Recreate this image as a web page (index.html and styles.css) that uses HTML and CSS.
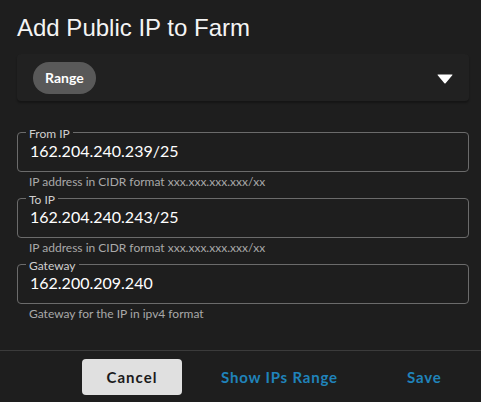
FILE: index.html
```html
<!DOCTYPE html>
<html lang="en">
<head>
<meta charset="utf-8">
<title>Add Public IP to Farm</title>
<link rel="stylesheet" href="styles.css">
</head>
<body>
<div class="dialog">
  <div class="content">
    <h2 class="title">Add Public IP to Farm</h2>
    <div class="select">
      <span class="chip">Range</span>
      <svg class="arrow" width="16" height="10" viewBox="0 0 16 10"><path d="M1 0.5 H15 Q16 0.5 15.3 1.3 L8.6 9.2 Q8 9.8 7.4 9.2 L0.7 1.3 Q0 0.5 1 0.5 Z" fill="#ffffff"/></svg>
    </div>
    <div class="fields">
      <div class="field">
        <fieldset class="box">
          <legend class="label">From IP</legend>
          <div class="value">162.204.240.239/25</div>
        </fieldset>
        <div class="helper">IP address in CIDR format xxx.xxx.xxx.xxx/xx</div>
      </div>
      <div class="field">
        <fieldset class="box">
          <legend class="label">To IP</legend>
          <div class="value">162.204.240.243/25</div>
        </fieldset>
        <div class="helper">IP address in CIDR format xxx.xxx.xxx.xxx/xx</div>
      </div>
      <div class="field">
        <fieldset class="box">
          <legend class="label">Gateway</legend>
          <div class="value">162.200.209.240</div>
        </fieldset>
        <div class="helper">Gateway for the IP in ipv4 format</div>
      </div>
    </div>
  </div>
  <div class="actions">
    <button class="btn cancel">Cancel</button>
    <button class="btn text show">Show IPs Range</button>
    <button class="btn text save">Save</button>
  </div>
</div>
</body>
</html>
```
FILE: styles.css
```css
html, body {
  margin: 0;
  padding: 0;
  background: #1e1e1e;
}
body {
  font-family: Lato, "Noto Sans", sans-serif;
  color: #ffffff;
  width: 481px;
  height: 402px;
  overflow: hidden;
}
.content {
  padding: 0 12px 28px 17px;
}
.title {
  margin: 12px 0 0 0;
  font-family: "Liberation Sans", Arial, sans-serif;
  font-weight: 400;
  font-size: 24px;
  line-height: 32px;
  color: #f4f4f4;
}
.select {
  margin-top: 10px;
  height: 47px;
  box-sizing: border-box;
  padding: 8px 16px 7px 16px;
  background: #212121;
  border-radius: 4px;
  box-shadow: 0 2px 2px rgba(0, 0, 0, 0.3);
  display: flex;
  align-items: flex-start;
  justify-content: space-between;
}
.chip {
  height: 32px;
  line-height: 32px;
  padding: 0 12px;
  border-radius: 16px;
  background: #595959;
  color: #ffffff;
  font-weight: 700;
  font-size: 14px;
}
.arrow {
  margin-top: 12px;
  display: block;
}
.fields {
  margin-top: 23px;
  display: flex;
  flex-direction: column;
}
.field {
  display: flex;
  flex-direction: column;
}
.box {
  margin: 0;
  padding: 0 0 8px 8px;
  border: 1px solid #6b6b6b;
  border-radius: 4px;
  min-width: 0;
}
.label {
  padding: 3px 3px 0 3px;
  font-size: 12px;
  line-height: 14px;
  color: #cfcfcf;
}
.value {
  margin: -2px 0 0 4px;
  font-size: 16px;
  line-height: 24px;
  color: #ffffff;
}
.helper {
  margin: 2px 0 0 12px;
  font-size: 12px;
  line-height: 16px;
  color: #a9a9a9;
}
.actions {
  border-top: 1px solid #3b3b3b;
  padding: 8px 0 0 82px;
  display: flex;
  align-items: flex-start;
}
.btn {
  height: 36px;
  border: none;
  border-radius: 4px;
  padding: 0;
  font-family: Lato, "Noto Sans", sans-serif;
  font-weight: 700;
  font-size: 15px;
  letter-spacing: 0.8px;
  white-space: nowrap;
  cursor: pointer;
}
.cancel {
  width: 100px;
  background: #e0e0e0;
  color: #1b1b1b;
  letter-spacing: 1px;
}
.text {
  background: transparent;
  color: #2083ba;
}
.show {
  margin-left: 39px;
  width: 116px;
}
.save {
  margin-left: 70px;
  width: 34px;
}
```
